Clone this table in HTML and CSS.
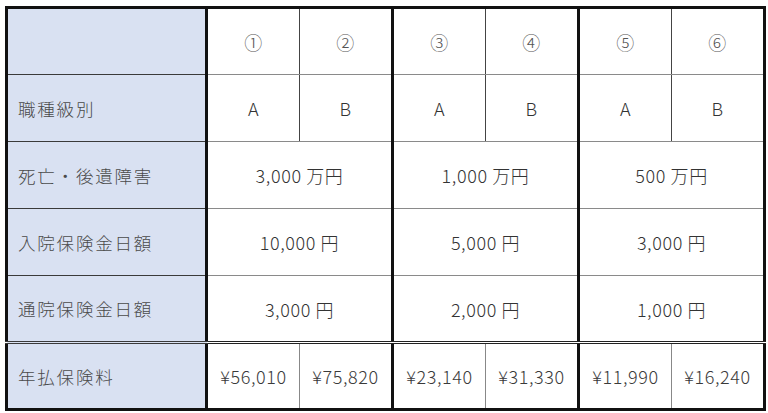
FILE: index.html
```html
<!DOCTYPE html>
<html lang="ja">
<head>
<meta charset="utf-8">
<link rel="stylesheet" href="styles.css">
</head>
<body>
<table class="plan">
  <colgroup>
    <col class="c-label">
    <col class="c-data"><col class="c-data"><col class="c-data">
    <col class="c-data"><col class="c-data"><col class="c-data">
  </colgroup>
  <tr class="row-head">
    <th class="label"></th>
    <td class="g-start">①</td><td class="g-mid">②</td>
    <td class="g-start">③</td><td class="g-mid">④</td>
    <td class="g-start">⑤</td><td class="g-mid">⑥</td>
  </tr>
  <tr>
    <th class="label">職種級別</th>
    <td class="g-start">A</td><td class="g-mid">B</td>
    <td class="g-start">A</td><td class="g-mid">B</td>
    <td class="g-start">A</td><td class="g-mid">B</td>
  </tr>
  <tr>
    <th class="label">死亡・後遺障害</th>
    <td class="g-start" colspan="2">3,000 万円</td>
    <td class="g-start" colspan="2">1,000 万円</td>
    <td class="g-start" colspan="2">500 万円</td>
  </tr>
  <tr>
    <th class="label">入院保険金日額</th>
    <td class="g-start" colspan="2">10,000 円</td>
    <td class="g-start" colspan="2">5,000 円</td>
    <td class="g-start" colspan="2">3,000 円</td>
  </tr>
  <tr class="row-before-total">
    <th class="label">通院保険金日額</th>
    <td class="g-start" colspan="2">3,000 円</td>
    <td class="g-start" colspan="2">2,000 円</td>
    <td class="g-start" colspan="2">1,000 円</td>
  </tr>
  <tr class="row-total">
    <th class="label">年払保険料</th>
    <td class="g-start">¥56,010</td><td class="g-mid">¥75,820</td>
    <td class="g-start">¥23,140</td><td class="g-mid">¥31,330</td>
    <td class="g-start">¥11,990</td><td class="g-mid">¥16,240</td>
  </tr>
</table>
</body>
</html>
```

FILE: styles.css
```css
html, body {
  margin: 0;
  padding: 0;
  background: #ffffff;
}

body {
  padding: 6px 0 0 5px;
  font-family: "Noto Sans CJK JP", "Noto Sans", sans-serif;
}

.plan {
  border-collapse: collapse;
  table-layout: fixed;
  border: 3px solid #111;
}

.c-label { width: 200px; }
.c-data { width: 93px; }

.plan tr {
  height: 67px;
}

.plan th,
.plan td {
  padding: 0;
  border-top: 1px solid #8a8a8a;
  border-bottom: 1px solid #8a8a8a;
  font-size: 18px;
  font-weight: 300;
  color: #333;
  text-align: center;
  vertical-align: middle;
  white-space: nowrap;
}

.plan th.label {
  background: #d9e1f2;
  text-align: left;
  padding-left: 10px;
  font-size: 17.5px;
  color: #4a4a4a;
  letter-spacing: 1.8px;
  border-top-color: #3a3a3a;
  border-bottom-color: #3a3a3a;
  border-right: 3px solid #111;
}

.plan td.g-start {
  border-left: 3px solid #111;
}

.plan td.g-mid {
  border-left: 1px solid #444;
}

.plan td {
  letter-spacing: 0.6px;
}

.row-head td {
  color: #555;
}

.row-before-total th,
.row-before-total td {
  border-bottom: 3px double #222;
}

.row-total td {
  border-bottom: 3px solid #111;
  color: #3a3a3a;
}

.row-total td.g-mid {
  border-left-color: #888;
}
```
